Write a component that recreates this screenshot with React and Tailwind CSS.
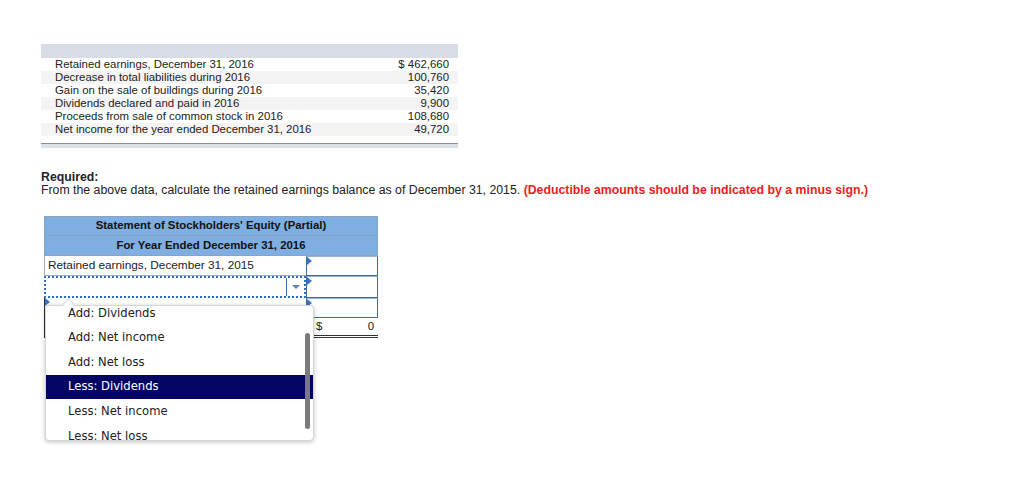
import React from "react";

const rows = [
  ["Retained earnings, December 31, 2016", "$ 462,660"],
  ["Decrease in total liabilities during 2016", "100,760"],
  ["Gain on the sale of buildings during 2016", "35,420"],
  ["Dividends declared and paid in 2016", "9,900"],
  ["Proceeds from sale of common stock in 2016", "108,680"],
  ["Net income for the year ended December 31, 2016", "49,720"],
];

const options = [
  "Add: Dividends",
  "Add: Net income",
  "Add: Net loss",
  "Less: Dividends",
  "Less: Net income",
  "Less: Net loss",
];

function Marker() {
  return (
    <span className="absolute left-0 top-0 w-0 h-0 border-t-[4px] border-b-[4px] border-l-[5px] border-t-transparent border-b-transparent border-l-[#3b73c0]" />
  );
}

function InputCell() {
  return (
    <div className="relative w-[72px] h-full border border-[#3f6ba3] border-t-[#9bb3d3] bg-white">
      <Marker />
    </div>
  );
}

export default function App() {
  return (
    <div className="w-[1024px] h-[481px] bg-white text-black overflow-hidden" style={{ fontFamily: '"Liberation Sans", Arial, sans-serif' }}>
      {/* data table */}
      <div className="pt-[44px] pl-[41px]">
        <div className="w-[417px]">
          <div className="h-[14px] bg-[#d8dce4]" />
          <div className="text-[11.4px] leading-[13px] text-[#222]">
            {rows.map((r, i) => (
              <div key={i} className={`flex justify-between pl-[14px] pr-[9px] h-[13px] ${i % 2 ? "bg-[#f4f4f5]" : "bg-white"}`}>
                <span>{r[0]}</span>
                <span>{r[1]}</span>
              </div>
            ))}
          </div>
          <div className="mt-[7px] h-[5px] bg-[#dde0e6] border-t border-[#8a8f98]" />
        </div>
      </div>

      {/* required */}
      <div className="pl-[41px] mt-[23px] text-[12.3px] leading-[13px] text-[#222]">
        <div className="font-bold">Required:</div>
        <div>
          From the above data, calculate the retained earnings balance as of December 31, 2015.{" "}
          <span className="font-bold text-[#ee1c24]">(Deductible amounts should be indicated by a minus sign.)</span>
        </div>
      </div>

      {/* statement */}
      <div className="relative ml-[44px] mt-[19px] w-[334px] text-[11.4px]">
        <div className="h-[20px] bg-[#7eaee2] border border-[#8aa3c3] flex items-center justify-center font-bold text-[#111]">
          Statement of Stockholders' Equity (Partial)
        </div>
        <div className="h-[20px] bg-[#7eaee2] border border-t-0 border-[#8aa3c3] flex items-center justify-center font-bold text-[#111]">
          For Year Ended December 31, 2016
        </div>
        <div className="flex h-[20px]">
          <div className="w-[262px] border-l border-b border-[#aaa] flex items-center pl-[3px] text-[#222] text-[11.8px]">
            Retained earnings, December 31, 2015
          </div>
          <InputCell />
        </div>
        <div className="flex h-[22px]">
          <div className="w-[262px] border-2 border-dotted border-[#2f6fc4] bg-white flex">
            <div className="flex-1" />
            <div className="w-[18px] border-l border-[#3f6ba3] flex items-center justify-center">
              <span className="w-0 h-0 border-l-[4px] border-r-[4px] border-t-[4px] border-l-transparent border-r-transparent border-t-[#5b86c0]" />
            </div>
          </div>
          <div className="relative h-full">
            <InputCell />
          </div>
        </div>
        <div className="flex h-[20px]">
          <div className="relative w-[262px] border-l border-[#333]">
            <Marker />
          </div>
          <InputCell />
        </div>
        <div className="flex h-[20px]">
          <div className="w-[270px] border-l border-[#333]" />
          <div className="w-[64px] flex justify-between items-center pl-[2px] pr-[4px] border-b-[3px] border-double border-[#333] text-[#222]">
            <span>$</span>
            <span>0</span>
          </div>
        </div>

        {/* dropdown popup */}
        <div className="absolute left-[1px] top-[89px] w-[269px] h-[136px] bg-white rounded-[4px] border border-[#d6d6d6] shadow-[0_1px_4px_rgba(0,0,0,0.25)] overflow-hidden" style={{ fontFamily: '"DejaVu Sans", Verdana, sans-serif' }}>
          <div className="-mt-[5px]">
            {options.map((o, i) => (
              <div key={o} className={`h-[24.6px] flex items-center pl-[22px] text-[11.6px] ${i === 3 ? "bg-[#040465] text-white" : "text-[#222]"}`}>
                {o}
              </div>
            ))}
          </div>
          <div className="absolute right-[3px] top-[27px] w-[5px] h-[96px] rounded-full bg-[#7a7a7a]" />
        </div>
        <div className="absolute left-[20px] top-[84px] w-[9px] h-[9px] bg-white border-l border-t border-[#d6d6d6] rotate-45" />
      </div>
    </div>
  );
}
